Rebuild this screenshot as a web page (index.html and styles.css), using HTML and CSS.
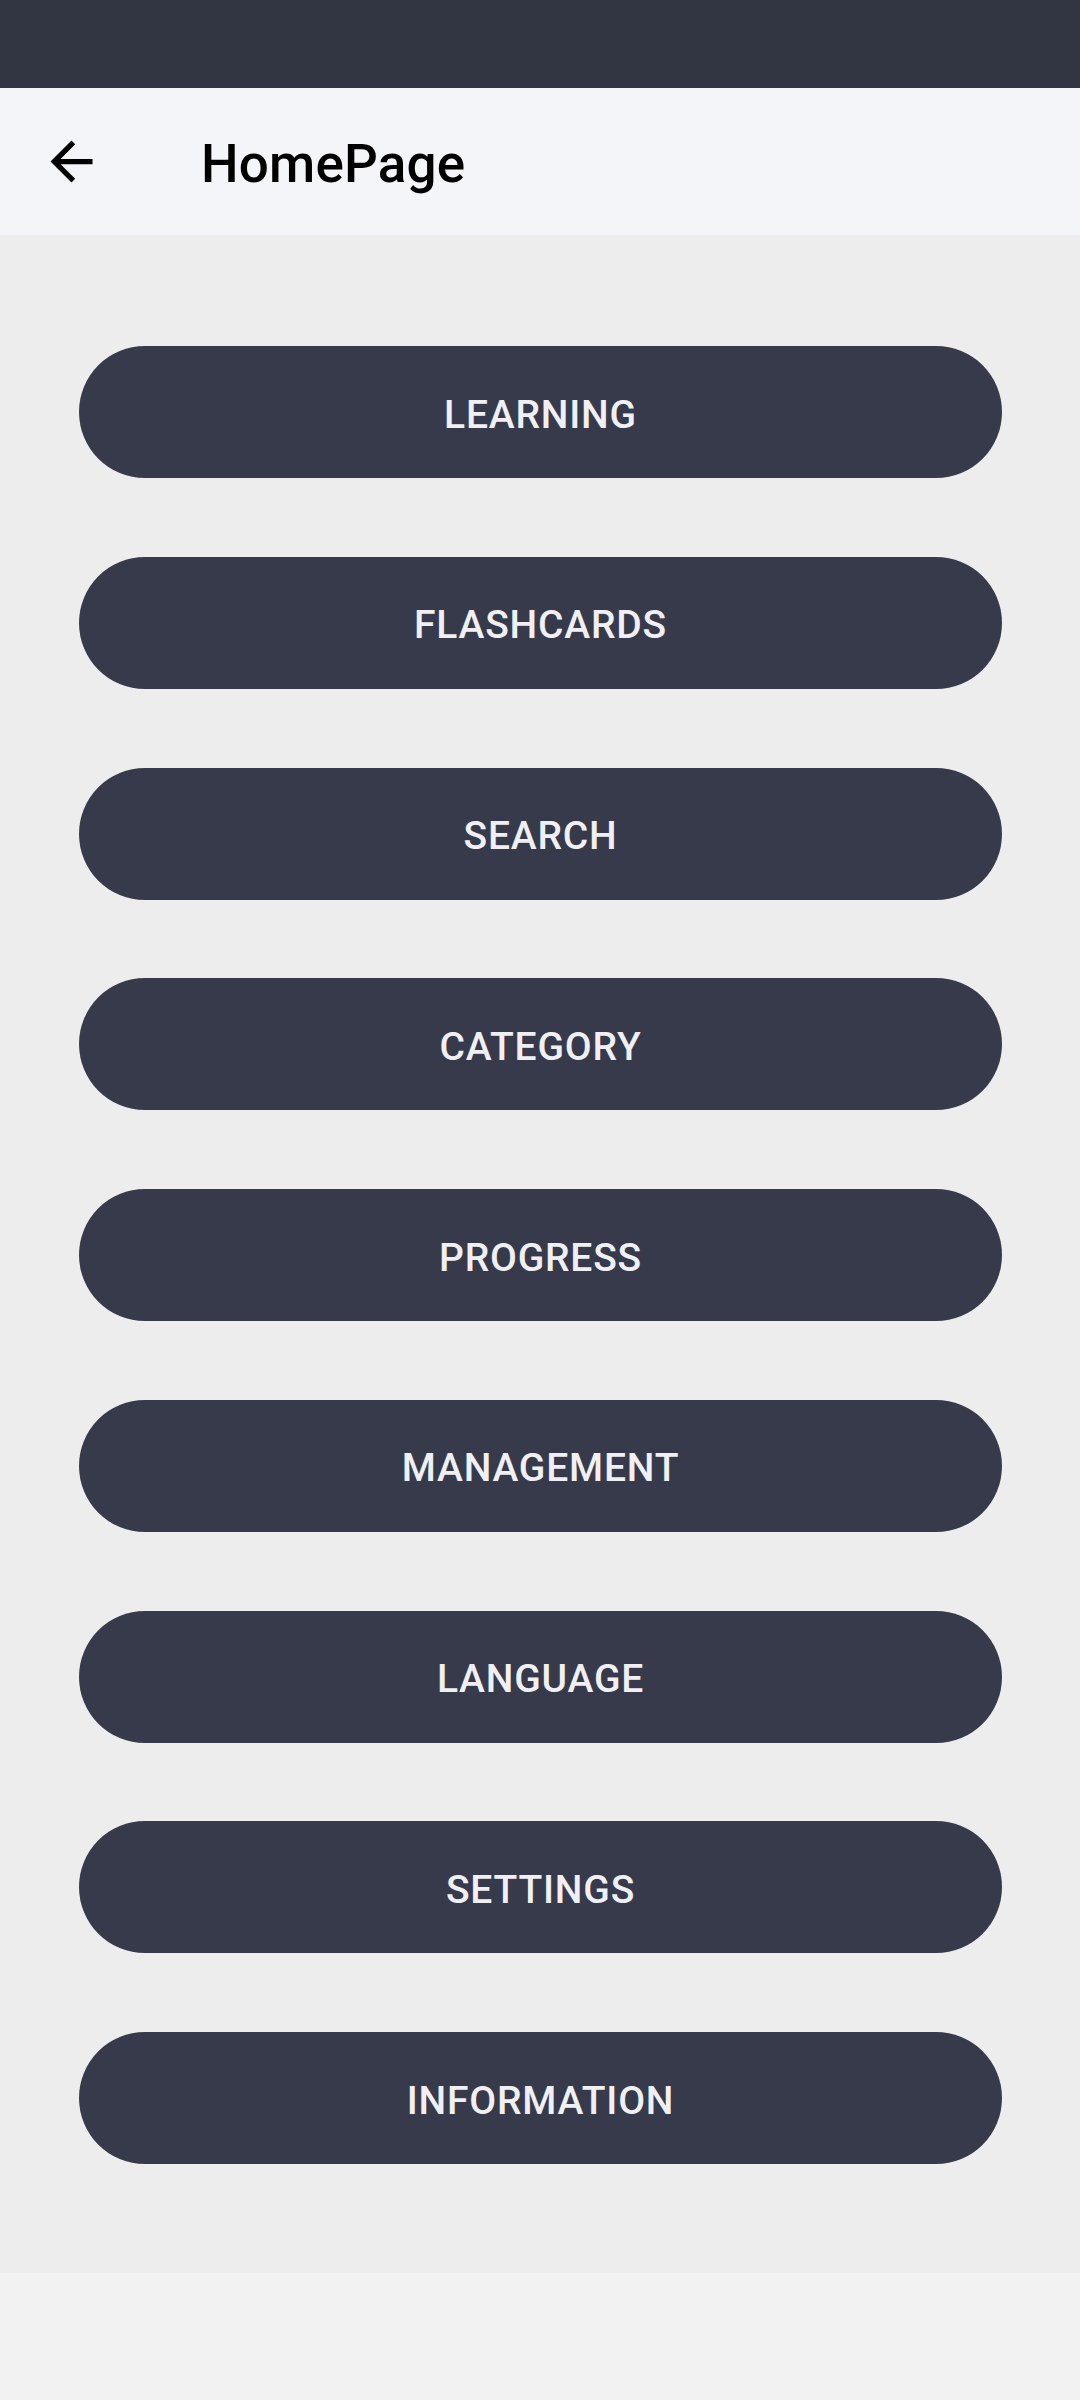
FILE: index.html
```html
<!DOCTYPE html>
<html lang="en">
<head>
<meta charset="utf-8">
<title>HomePage</title>
<link rel="stylesheet" href="styles.css">
</head>
<body>
<div class="screen">
  <div class="status-bar"></div>
  <header class="app-bar">
    <button class="back" aria-label="Back">
      <svg viewBox="0 0 24 24" width="63" height="63"><path d="M20 11H7.83l5.59-5.59L12 4l-8 8 8 8 1.41-1.41L7.83 13H20v-2z" fill="#000"/></svg>
    </button>
    <h1 class="title">HomePage</h1>
  </header>
  <main class="content">
    <button class="menu-btn">LEARNING</button>
    <button class="menu-btn">FLASHCARDS</button>
    <button class="menu-btn">SEARCH</button>
    <button class="menu-btn">CATEGORY</button>
    <button class="menu-btn">PROGRESS</button>
    <button class="menu-btn">MANAGEMENT</button>
    <button class="menu-btn">LANGUAGE</button>
    <button class="menu-btn">SETTINGS</button>
    <button class="menu-btn">INFORMATION</button>
  </main>
  <div class="bottom"></div>
</div>
</body>
</html>
```
FILE: styles.css
```css
* { box-sizing: border-box; }
html, body { margin: 0; padding: 0; }
body {
  width: 1080px;
  height: 2400px;
  font-family: Roboto, "Noto Sans", "Liberation Sans", sans-serif;
  background: #f2f2f2;
}
.screen {
  display: flex;
  flex-direction: column;
  height: 2400px;
}
.status-bar {
  height: 88px;
  background: #323643;
}
.app-bar {
  height: 147px;
  background: #f4f5f9;
  display: flex;
  align-items: center;
  padding-left: 40px;
}
.back {
  width: 63px;
  height: 63px;
  padding: 0;
  border: 0;
  background: transparent;
  display: flex;
}
.title {
  margin: 6px 0 0 98px;
  font-size: 53px;
  font-weight: 500;
  letter-spacing: 0.2px;
  color: #000;
  line-height: 1;
}
.content {
  background: #ededed;
  padding: 111px 78px 109px 79px;
  display: flex;
  flex-direction: column;
  gap: 78.75px;
}
.menu-btn {
  height: 132px;
  border: 0;
  border-radius: 66px;
  background: #363a4a;
  color: #f0f0f4;
  font-family: Roboto, "Noto Sans", "Liberation Sans", sans-serif;
  font-weight: 500;
  font-size: 39px;
  letter-spacing: 0.8px;
  padding: 5px 0 0 0;
}
.bottom {
  flex: 1;
  background: #f2f2f2;
}
```
